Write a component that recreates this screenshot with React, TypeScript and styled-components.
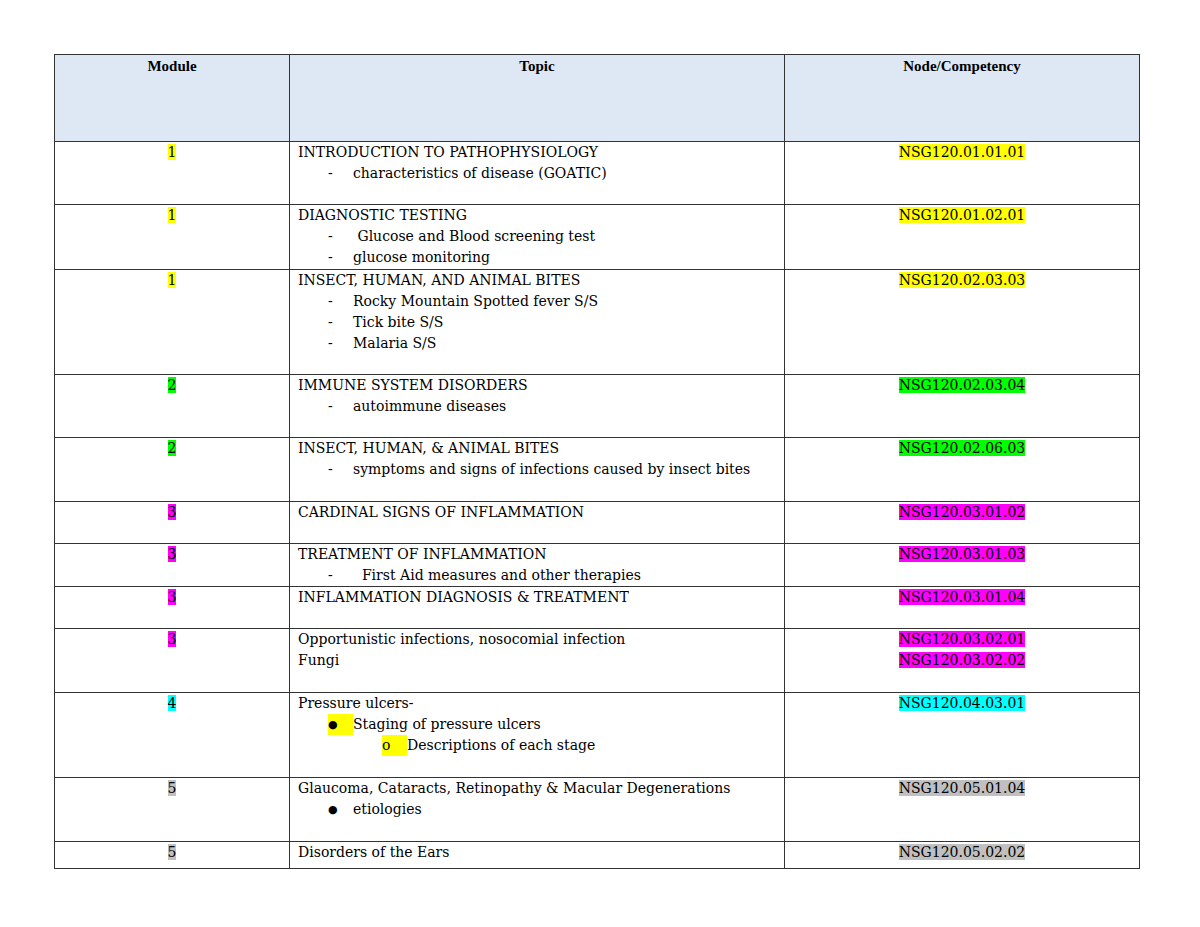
import React from "react";
import styled, { createGlobalStyle } from "styled-components";

const Global = createGlobalStyle`
  body { margin: 0; background: #fff; font-family: "DejaVu Serif", "Liberation Serif", serif; color: #000; }
`;
const Page = styled.div`padding: 54px 0 0 54px;`;
const Table = styled.table`
  border-collapse: collapse; width: 1085px; table-layout: fixed; font-size: 14px;
`;
const Th = styled.th`
  background: #dde8f4; border: 1px solid #333; height: 82px; vertical-align: top;
  padding-top: 3px; font-size: 15px; font-weight: bold; font-family: "Liberation Serif", serif;
`;
const Td = styled.td<{ $center?: boolean }>`
  border: 1px solid #333; vertical-align: top; padding: 0 8px 0 8px; line-height: 21px;
  text-align: ${(p) => (p.$center ? "center" : "left")};
`;
const Tr = styled.tr<{ $h: number }>`height: ${(p) => p.$h}px;`;
const Mark = styled.span<{ $c: string }>`background: ${(p) => p.$c};`;
const Sub = styled.div<{ $lvl?: number }>`
  display: flex; padding-left: ${(p) => (p.$lvl === 2 ? 84 : 30)}px;
`;
const Sym = styled.span<{ $c?: string }>`
  width: 25px; flex: none; background: ${(p) => p.$c || "transparent"};
`;

type Item = { t: string; sym?: string; lvl?: number; hl?: string };
type Row = { m: string; c: string; h: number; title: string[]; items?: Item[]; codes: string[] };
const Y = "#ffff00", G = "#00ff00", M = "#ff00ff", C = "#00ffff", S = "#c0c0c0";
const rows: Row[] = [
  { m: "1", c: Y, h: 63, title: ["INTRODUCTION TO PATHOPHYSIOLOGY"], items: [{ t: "characteristics of disease (GOATIC)" }], codes: ["NSG120.01.01.01"] },
  { m: "1", c: Y, h: 65, title: ["DIAGNOSTIC TESTING"], items: [{ t: " Glucose and Blood screening test" }, { t: "glucose monitoring" }], codes: ["NSG120.01.02.01"] },
  { m: "1", c: Y, h: 105, title: ["INSECT, HUMAN, AND ANIMAL BITES"], items: [{ t: "Rocky Mountain Spotted fever S/S" }, { t: "Tick bite S/S" }, { t: "Malaria S/S" }], codes: ["NSG120.02.03.03"] },
  { m: "2", c: G, h: 63, title: ["IMMUNE SYSTEM DISORDERS"], items: [{ t: "autoimmune diseases" }], codes: ["NSG120.02.03.04"] },
  { m: "2", c: G, h: 64, title: ["INSECT, HUMAN, & ANIMAL BITES"], items: [{ t: "symptoms and signs of infections caused by insect bites" }], codes: ["NSG120.02.06.03"] },
  { m: "3", c: M, h: 42, title: ["CARDINAL SIGNS OF INFLAMMATION"], codes: ["NSG120.03.01.02"] },
  { m: "3", c: M, h: 43, title: ["TREATMENT OF INFLAMMATION"], items: [{ t: "  First Aid measures and other therapies" }], codes: ["NSG120.03.01.03"] },
  { m: "3", c: M, h: 42, title: ["INFLAMMATION DIAGNOSIS & TREATMENT"], codes: ["NSG120.03.01.04"] },
  { m: "3", c: M, h: 64, title: ["Opportunistic infections, nosocomial infection", "Fungi"], codes: ["NSG120.03.02.01", "NSG120.03.02.02"] },
  { m: "4", c: C, h: 85, title: ["Pressure ulcers-"], items: [{ t: "Staging of pressure ulcers", sym: "●", hl: Y }, { t: "Descriptions of each stage", sym: "o", lvl: 2, hl: Y }], codes: ["NSG120.04.03.01"] },
  { m: "5", c: S, h: 64, title: ["Glaucoma, Cataracts, Retinopathy & Macular Degenerations"], items: [{ t: "etiologies", sym: "●" }], codes: ["NSG120.05.01.04"] },
  { m: "5", c: S, h: 27, title: ["Disorders of the Ears"], codes: ["NSG120.05.02.02"] },
];

export default function App() {
  return (
    <Page>
      <Global />
      <Table>
        <colgroup><col style={{ width: 235 }} /><col style={{ width: 495 }} /><col style={{ width: 355 }} /></colgroup>
        <thead>
          <tr><Th>Module</Th><Th>Topic</Th><Th>Node/Competency</Th></tr>
        </thead>
        <tbody>
          {rows.map((r, i) => (
            <Tr key={i} $h={r.h}>
              <Td $center><Mark $c={r.c}>{r.m}</Mark></Td>
              <Td>
                {r.title.map((t) => <div key={t}>{t}</div>)}
                {r.items?.map((it) => (
                  <Sub key={it.t} $lvl={it.lvl}>
                    <Sym $c={it.hl} style={{ fontSize: it.sym === "●" ? 11 : undefined }}>{it.sym || "-"}</Sym>
                    <span style={{ whiteSpace: "pre" }}>{it.t}</span>
                  </Sub>
                ))}
              </Td>
              <Td $center>
                {r.codes.map((c) => <div key={c}><Mark $c={r.c}>{c}</Mark></div>)}
              </Td>
            </Tr>
          ))}
        </tbody>
      </Table>
    </Page>
  );
}
